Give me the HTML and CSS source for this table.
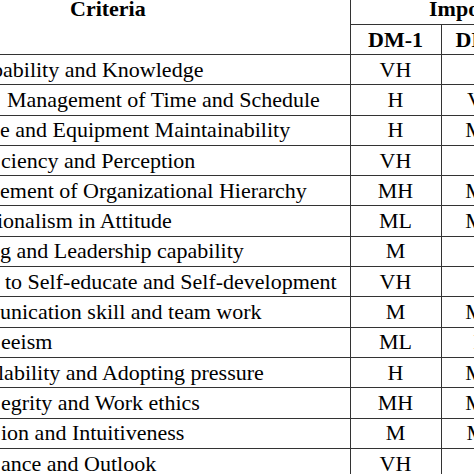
FILE: index.html
```html
<!DOCTYPE html>
<html>
<head>
<meta charset="utf-8">
<link rel="stylesheet" href="styles.css">
</head>
<body>
<div class="frame">
<table class="grid">
<colgroup><col class="c-crit"><col class="c-dm1"><col class="c-dm2"><col class="c-dm3"></colgroup>
<thead>
<tr class="h1"><th rowspan="2" class="crit-head">Criteria</th><th colspan="3" class="imp">Importance</th></tr>
<tr class="h2"><th>DM-1</th><th>DM-2</th><th>DM-3</th></tr>
</thead>
<tbody>
<tr><td class="crit cut-p">pability and Knowledge</td><td>VH</td><td>H</td><td>VH</td></tr>
<tr><td class="crit gap-w">Management of Time and Schedule</td><td>H</td><td>VH</td><td>H</td></tr>
<tr><td class="crit">e and Equipment Maintainability</td><td>H</td><td>MH</td><td>H</td></tr>
<tr><td class="crit nudge">ciency and Perception</td><td>VH</td><td>H</td><td>VH</td></tr>
<tr><td class="crit">ement of Organizational Hierarchy</td><td>MH</td><td>MH</td><td>M</td></tr>
<tr><td class="crit cut-i">ionalism in Attitude</td><td>ML</td><td>MH</td><td>M</td></tr>
<tr><td class="crit">g and Leadership capability</td><td>M</td><td>H</td><td>MH</td></tr>
<tr><td class="crit gap-n">to Self-educate and Self-development</td><td>VH</td><td>H</td><td>H</td></tr>
<tr><td class="crit">unication skill and team work</td><td>M</td><td>MH</td><td>M</td></tr>
<tr><td class="crit nudge">eeism</td><td>ML</td><td>M</td><td>ML</td></tr>
<tr><td class="crit cut-l">lability and Adopting pressure</td><td>H</td><td>MH</td><td>H</td></tr>
<tr><td class="crit nudge">egrity and Work ethics</td><td>MH</td><td>MH</td><td>MH</td></tr>
<tr><td class="crit nudge">ion and Intuitiveness</td><td>M</td><td>ML</td><td>M</td></tr>
<tr><td class="crit nudge">ance and Outlook</td><td>VH</td><td>H</td><td>VH</td></tr>
</tbody>
</table>
</div>
</body>
</html>
```
FILE: styles.css
```css
html, body {
  margin: 0;
  padding: 0;
  background: #ffffff;
}
.frame {
  width: 474px;
  height: 474px;
  overflow: hidden;
  background: #ffffff;
}
.grid {
  border-collapse: collapse;
  table-layout: fixed;
  width: 618px;
  margin-top: -6px;
  font-family: "Liberation Serif", "Times New Roman", serif;
  font-size: 22px;
  color: #000000;
}
.c-crit { width: 350px; }
.c-dm1 { width: 91px; }
.c-dm2 { width: 84px; }
.c-dm3 { width: 93px; }
.grid th, .grid td {
  border: 1.5px solid #333333;
  padding: 0;
  line-height: 24px;
  text-align: center;
  vertical-align: middle;
  white-space: nowrap;
  overflow: hidden;
}
.grid th { font-weight: bold; }
.h1 { height: 30px; }
.h2 { height: 30px; }
.grid tbody tr { height: 30.3px; }
.h1 th { vertical-align: top; padding-top: 2px; }
.grid .crit-head {
  text-align: left;
  padding-left: 70px;
  border-left: 0;
}
.grid .crit {
  text-align: left;
  border-left: 0;
  overflow: visible;
}
.cut-p { text-indent: -8px; }
.cut-i { text-indent: -3px; }
.cut-l { text-indent: -2px; }
.gap-w { text-indent: 7px; }
.gap-n { text-indent: 5px; }
.nudge { text-indent: 1px; }
```
